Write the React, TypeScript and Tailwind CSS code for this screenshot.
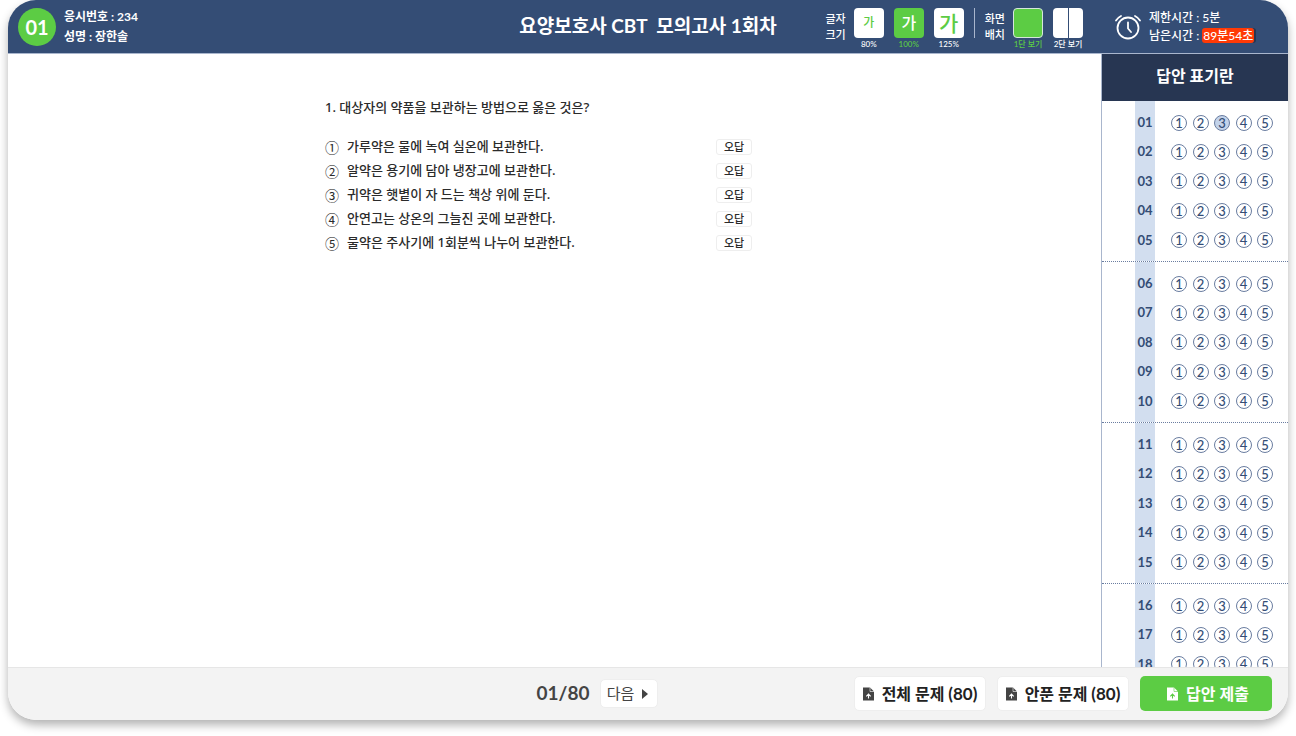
import { useState } from "react";

const hangul = "font-['Noto_Sans','Noto_Sans_CJK_KR',sans-serif]";

const fontSizes = [
  { label: "80%", text: "text-[12px]" },
  { label: "100%", text: "text-[16px]" },
  { label: "125%", text: "text-[21px]" },
];

const choices = [
  "가루약은 물에 녹여 실온에 보관한다.",
  "알약은 용기에 담아 냉장고에 보관한다.",
  "귀약은 햇볕이 자 드는 책상 위에 둔다.",
  "안연고는 상온의 그늘진 곳에 보관한다.",
  "물약은 주사기에 1회분씩 나누어 보관한다.",
];

const marks = ["①", "②", "③", "④", "⑤"];

const groups = [
  [1, 2, 3, 4, 5],
  [6, 7, 8, 9, 10],
  [11, 12, 13, 14, 15],
  [16, 17, 18],
];

const pad = (n: number) => String(n).padStart(2, "0");

const ClockIcon = () => (
  <svg
    viewBox="0 0 28 26"
    className="h-[26px] w-[28px] shrink-0"
    fill="none"
    stroke="currentColor"
    strokeWidth="1.8"
    strokeLinecap="round"
    strokeLinejoin="round"
    aria-hidden="true"
  >
    <circle cx="14" cy="14" r="10.5" />
    <path d="M14 8.5v6l3 3.5" />
    <path d="M2 6.5Q4 3.5 7 2M26 6.5Q24 3.5 21 2" />
  </svg>
);

const FileIcon = ({ arrow }: { arrow: string }) => (
  <svg viewBox="0 0 11 14" className="h-[14px] w-[11px] shrink-0" aria-hidden="true">
    <path d="M0 .5h7l4 4v9H0z" fill="currentColor" />
    <path d="M7 .5v4h4" fill="none" stroke={arrow} strokeWidth="0.6" />
    <path
      d="M5.5 11.5V7.3M3.3 9.3l2.2-2.2 2.2 2.2"
      fill="none"
      stroke={arrow}
      strokeWidth="1.1"
    />
  </svg>
);

const Header = ({
  size,
  onSize,
}: {
  size: string;
  onSize: (size: string) => void;
}) => (
  <header className="grid h-[54px] shrink-0 grid-cols-[1fr_auto_1fr] items-center border-b border-[#a9b6cd] bg-[#344d75] text-white">
    <div className="flex items-center gap-2 pl-[10px]">
      <span className="grid size-[38px] place-items-center rounded-full bg-[#5ccc44] text-[20px] font-bold">
        01
      </span>
      <div className="text-[12px] leading-[20px] font-bold">
        <p>응시번호 : 234</p>
        <p>성명 : 장한솔</p>
      </div>
    </div>

    <h1 className="text-[19px] font-bold whitespace-pre">
      요양보호사 CBT  모의고사 1회차
    </h1>

    <div className="flex items-center justify-end">
      {/* Font size */}
      <div className="flex gap-2 pt-1 pr-[10px]">
        <p className="pt-[3px] text-[11px] leading-4 font-medium">
          글자
          <br />
          크기
        </p>
        <div className="flex gap-[10px]">
          {fontSizes.map((item) => (
            <button
              key={item.label}
              type="button"
              onClick={() => onSize(item.label)}
              className={`flex w-[30px] flex-col items-center text-[8px] leading-3 font-medium ${
                item.label === size ? "text-[#5ccc44]" : "text-white"
              }`}
            >
              <span
                className={`grid size-[30px] place-items-center rounded-[4px] font-medium ${item.text} ${
                  item.label === size
                    ? "bg-[#5ccc44] text-white"
                    : "bg-white text-[#5ccc44]"
                }`}
              >
                가
              </span>
              {item.label}
            </button>
          ))}
        </div>
      </div>

      {/* Column layout */}
      <div className="flex gap-[10px] pt-1 pr-[19px]">
        <span className="h-[30px] w-px bg-[#a9b6cd]" />
        <div className="flex gap-2">
          <p className="pt-[3px] text-[11px] leading-4 font-medium">
            화면
            <br />
            배치
          </p>
          <button
            type="button"
            className="flex w-[30px] flex-col items-center text-[8px] leading-3 font-medium whitespace-nowrap text-[#5ccc44]"
          >
            <span className="size-[30px] rounded-[4px] border border-[#d5e6dc] bg-[#5ccc44]" />
            1단 보기
          </button>
        </div>
        <button
          type="button"
          className="flex w-[30px] flex-col items-center text-[8px] leading-3 font-medium whitespace-nowrap"
        >
          <span className="flex size-[30px] justify-center rounded-[4px] bg-white">
            <span className="w-px bg-[#344d75]" />
          </span>
          2단 보기
        </button>
      </div>

      {/* Timer */}
      <div className="flex w-[186px] items-center gap-[7px] pl-3">
        <ClockIcon />
        <div className="text-[12px] leading-[18px] font-medium whitespace-nowrap">
          <p>제한시간 : 5분</p>
          <p>
            남은시간 :{" "}
            <span className="rounded-[3px] bg-[#ff3a06] px-px shadow-[2px_0_0_#273652]">
              89분54초
            </span>
          </p>
        </div>
      </div>
    </div>
  </header>
);

const Question = () => (
  <main className="flex-1 pt-[43px] pr-8">
    <section
      className={`mx-auto w-full max-w-[427px] text-[13px] font-medium text-[#2b2b2b] ${hangul}`}
    >
      <h2 className="leading-5">1. 대상자의 약품을 보관하는 방법으로 옳은 것은?</h2>
      <ol className="mt-[18px]">
        {choices.map((choice, i) => (
          <li key={choice} className="flex h-6 items-center">
            <span className="w-[22px] font-['Noto_Sans_CJK_KR',sans-serif] text-[14px] leading-5 font-normal">
              {marks[i]}
            </span>
            <span className="flex-1">{choice}</span>
            <button
              type="button"
              className="h-4 w-9 rounded-[3px] border border-[#eee] bg-white text-[11px] leading-[14px]"
            >
              오답
            </button>
          </li>
        ))}
      </ol>
    </section>
  </main>
);

const AnswerSheet = () => {
  const [answers, setAnswers] = useState<Record<number, number>>({ 1: 3 });

  return (
    <aside className="flex w-[187px] shrink-0 flex-col border-l border-[#a9b6cd] text-[#344d75]">
      <h2 className="h-[47px] shrink-0 bg-[#273652] text-center text-[16px] leading-[44px] font-bold text-white">
        답안 표기란
      </h2>
      <div className="min-h-0 flex-1 overflow-hidden">
        {groups.map((group) => (
          <div
            key={group[0]}
            className="flex border-b border-dotted border-[#6a7da0] pl-[33px]"
          >
            <div className="grid w-5 grid-rows-5 bg-[#d2deef] pt-[7px] pb-[6px] text-center text-[13px] font-bold">
              {group.map((n) => (
                <span key={n} className="self-center">
                  {pad(n)}
                </span>
              ))}
            </div>
            <div className="mt-[7px] mb-[6px] ml-4 grid h-[147px] w-[102px] grid-rows-5">
              {group.map((n) => (
                <div key={n} className="flex items-center justify-between">
                  {[1, 2, 3, 4, 5].map((c) => (
                    <label
                      key={c}
                      className="grid size-4 place-items-center text-[13px] leading-4 font-medium"
                    >
                      <input
                        type="radio"
                        name={`answer-${n}`}
                        checked={answers[n] === c}
                        onChange={() => setAnswers({ ...answers, [n]: c })}
                        className="col-start-1 row-start-1 size-4 appearance-none rounded-full border border-[#6a7da0] checked:bg-[#c3d3ea]"
                      />
                      <span className="col-start-1 row-start-1">{c}</span>
                    </label>
                  ))}
                </div>
              ))}
            </div>
          </div>
        ))}
      </div>
    </aside>
  );
};

const Footer = () => (
  <footer className="grid h-[53px] shrink-0 grid-cols-[1fr_auto_1fr] items-center border-t border-[#e6e6e6] bg-[#f3f3f3] pb-px text-[#444]">
    <div className="col-start-2 flex items-center gap-[11px] pr-[101px]">
      <span className="text-[19px] font-bold">01/80</span>
      <button
        type="button"
        className="flex h-[29px] w-[58px] items-center justify-center gap-2 rounded-[5px] border border-[#eee] bg-white pr-1 text-[15px]"
      >
        다음
        <svg viewBox="0 0 6 10" className="h-[10px] w-[6px]" aria-hidden="true">
          <path d="M0 0l6 5-6 5z" fill="currentColor" />
        </svg>
      </button>
    </div>
    <div className="flex justify-end gap-[11px] pr-4 text-[16px] font-bold whitespace-nowrap">
      {["전체 문제", "안푼 문제"].map((label) => (
        <button
          key={label}
          type="button"
          className="flex h-[35px] w-[132px] items-center justify-center gap-2 rounded-[5px] border border-[#eee] bg-white"
        >
          <FileIcon arrow="#fff" />
          <span className="text-[#222]">
            {label} <span className="text-[17px]">(80)</span>
          </span>
        </button>
      ))}
      <button
        type="button"
        className="flex h-[35px] w-[132px] items-center justify-center gap-2 rounded-[5px] bg-[#5ccc44] pl-1 text-white"
      >
        <FileIcon arrow="#5ccc44" />
        답안 제출
      </button>
    </div>
  </footer>
);

const App = () => {
  const [size, setSize] = useState("100%");

  return (
    <div className="h-screen bg-white px-2 pb-4 font-['Lato','Noto_Sans_CJK_KR',sans-serif]">
      <div className="flex h-full flex-col overflow-hidden rounded-[28px] bg-white shadow-[0_5px_10px_rgba(0,0,0,0.3)]">
        <Header size={size} onSize={setSize} />
        <div className="flex min-h-0 flex-1">
          <Question />
          <AnswerSheet />
        </div>
        <Footer />
      </div>
    </div>
  );
};

export default App;
